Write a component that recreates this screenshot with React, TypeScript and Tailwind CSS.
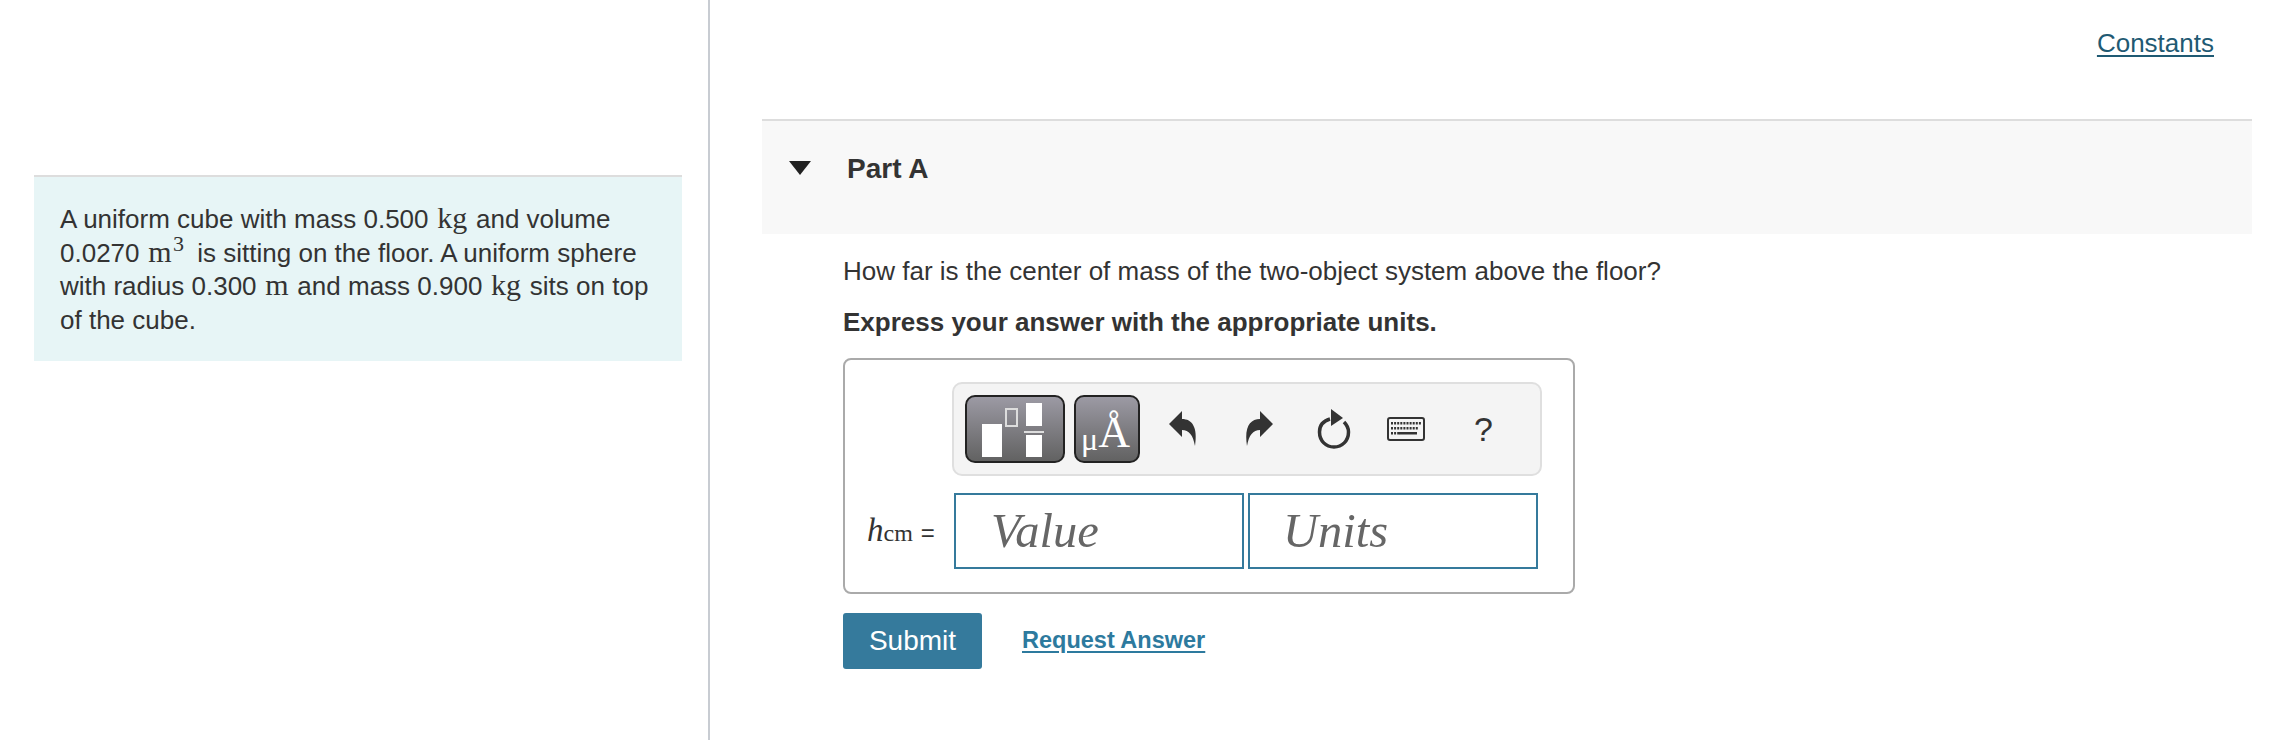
const sans = { fontFamily: '"Liberation Sans", Arial, sans-serif' }

function Undo({ flip }: { flip?: boolean }) {
  return (
    <svg width="30" height="38" viewBox="0 0 30 38" className={flip ? '-scale-x-100' : ''}>
      <path d="M1 14 L14 1 L14 9 C24 9 30 17 27 36 C25 25 21 20 14 20 L14 27 Z" fill="#333" />
    </svg>
  )
}

function Reset() {
  return (
    <svg width="34" height="42" viewBox="0 0 34 42" fill="none">
      <path d="M13 11 C6 13 2.5 18 2.5 24 C2.5 33 9 39 17 39 C25 39 31.5 33 31.5 24 C31.5 20 30 17 27 14" stroke="#333" strokeWidth="3.5" />
      <path d="M14 1 L26 10 L14 18 Z" fill="#333" />
    </svg>
  )
}

function Keyboard() {
  const rows = [
    { y: 7, n: 10 },
    { y: 12, n: 9 },
    { y: 17, n: 3 },
  ]
  return (
    <svg width="38" height="24" viewBox="0 0 38 24">
      <rect x="1" y="1" width="36" height="22" rx="2" fill="#f4f4f4" stroke="#333" strokeWidth="2" />
      {rows.map((r) =>
        Array.from({ length: r.n }).map((_, i) => (
          <rect key={`${r.y}-${i}`} x={4 + i * 3.1} y={r.y - 2} width="2" height="2.5" fill="#333" />
        )),
      )}
      <rect x="12" y="15" width="18" height="2.5" fill="#333" />
    </svg>
  )
}

function Unit({ children }: { children: string }) {
  return <span className="mx-[1.5px] font-['Liberation_Serif',serif] text-[30px] leading-none">{children}</span>
}

export default function App() {
  return (
    <div className="flex h-[740px] w-[2272px] overflow-hidden bg-white text-[#333]" style={sans}>
      {/* intro column */}
      <div className="h-full w-[710px] shrink-0 border-r-2 border-[#c8ccd2] pl-[34px] pt-[175px]">
        <div className="h-[186px] w-[648px] border-t-2 border-[#dddddd] bg-[#e7f5f6] pl-[26px] pr-[20px] pt-[26px] text-[26px] leading-[33.5px]">
          A uniform cube with mass 0.500 <Unit>kg</Unit> and volume
          <br />
          0.0270 <Unit>m</Unit>
          <sup className="relative -top-[11px] align-baseline font-['Liberation_Serif',serif] text-[22px] leading-none">3</sup>
          {'  '}
          <span className="ml-[6px]">is sitting on the floor. A uniform sphere</span>
          <br />
          with radius 0.300 <Unit>m</Unit> and mass 0.900 <Unit>kg</Unit> sits on top
          <br />
          of the cube.
        </div>
      </div>

      {/* part column */}
      <div className="flex min-w-0 flex-1 flex-col pl-[52px] pr-[20px]">
        <div className="flex h-[119px] items-start justify-end pr-[38px] pt-[25px]">
          <a className="text-[26px] leading-[36px] text-[#1f5a73] underline underline-offset-[3px]">Constants</a>
        </div>
        <div className="flex h-[115px] items-start border-t-2 border-[#dddddd] bg-[#f8f8f8] pl-[27px] pt-[31px]">
          <svg width="22" height="14" viewBox="0 0 22 14" className="mt-[9px]">
            <path d="M0 0 H22 L11 14 Z" fill="#222" />
          </svg>
          <span className="ml-[36px] text-[28px] font-bold leading-[34px]">Part A</span>
        </div>

        <div className="pl-[81px]">
          <p className="mt-[20px] text-[26px] leading-[34px]">How far is the center of mass of the two-object system above the floor?</p>
          <p className="mt-[17px] text-[26px] font-bold leading-[34px]">Express your answer with the appropriate units.</p>

          <div className="mt-[19px] flex h-[236px] w-[732px] flex-col rounded-[8px] border-2 border-[#aaaaaa] pl-[107px] pt-[22px]">
            <div className="flex h-[94px] w-[590px] items-center rounded-[10px] border-2 border-[#dfdfdf] bg-[#f4f4f4] pl-[11px]">
              <button className="relative h-[68px] w-[100px] rounded-[10px] border-2 border-[#222] bg-gradient-to-b from-[#9c9aa4] to-[#626262]">
                <svg width="78" height="56" viewBox="0 0 78 56" className="absolute left-[13px] top-[5px]">
                  <rect x="2" y="22" width="20" height="33" fill="#fff" />
                  <rect x="26" y="7" width="11" height="17" fill="none" stroke="#ddd" strokeWidth="2" />
                  <rect x="46" y="1" width="16" height="23" fill="#fff" />
                  <rect x="44" y="29" width="20" height="2" fill="#ddd" />
                  <rect x="46" y="33" width="16" height="22" fill="#fff" />
                </svg>
              </button>
              <button className="ml-[9px] flex h-[68px] w-[66px] items-end justify-center rounded-[10px] border-2 border-[#222] bg-gradient-to-b from-[#9c9aa4] to-[#626262] pb-[6px] pr-[3px] font-['Liberation_Serif',serif] leading-none text-white">
                <span className="text-[32px] leading-none">μ</span>
                <span className="text-[44px] leading-none">Å</span>
              </button>
              <span className="ml-[28px] flex w-[30px] justify-center"><Undo /></span>
              <span className="ml-[46px] flex w-[30px] justify-center"><Undo flip /></span>
              <span className="ml-[43px] flex w-[34px] justify-center"><Reset /></span>
              <span className="ml-[36px] flex w-[38px] justify-center"><Keyboard /></span>
              <span className="ml-[49px] text-[34px] leading-none text-[#333]">?</span>
            </div>

            <div className="relative ml-[2px] mt-[17px] flex gap-[4px]">
              <div className="absolute -left-[87px] top-[19px] flex items-baseline whitespace-nowrap">
                <span className="font-['Liberation_Serif',serif] text-[33px] italic leading-[36px]">h</span>
                <span className="font-['Liberation_Serif',serif] text-[24px] leading-none">cm</span>
                <span className="ml-[8px] text-[24px] leading-none">=</span>
              </div>
              <div className="flex h-[76px] w-[290px] items-center border-2 border-[#357a9c] pl-[35px] font-['Liberation_Serif',serif] text-[48.5px] italic text-[#666]">Value</div>
              <div className="flex h-[76px] w-[290px] items-center border-2 border-[#357a9c] pl-[33px] font-['Liberation_Serif',serif] text-[48.5px] italic text-[#666]">Units</div>
            </div>
          </div>

          <div className="mt-[19px] flex items-center">
            <button className="h-[56px] w-[139px] rounded-[3px] bg-[#357a9c] text-[28px] leading-none text-white">Submit</button>
            <a className="ml-[40px] text-[23.5px] font-bold text-[#2d7a9e] underline underline-offset-[3px]">Request Answer</a>
          </div>
        </div>
      </div>
    </div>
  )
}
